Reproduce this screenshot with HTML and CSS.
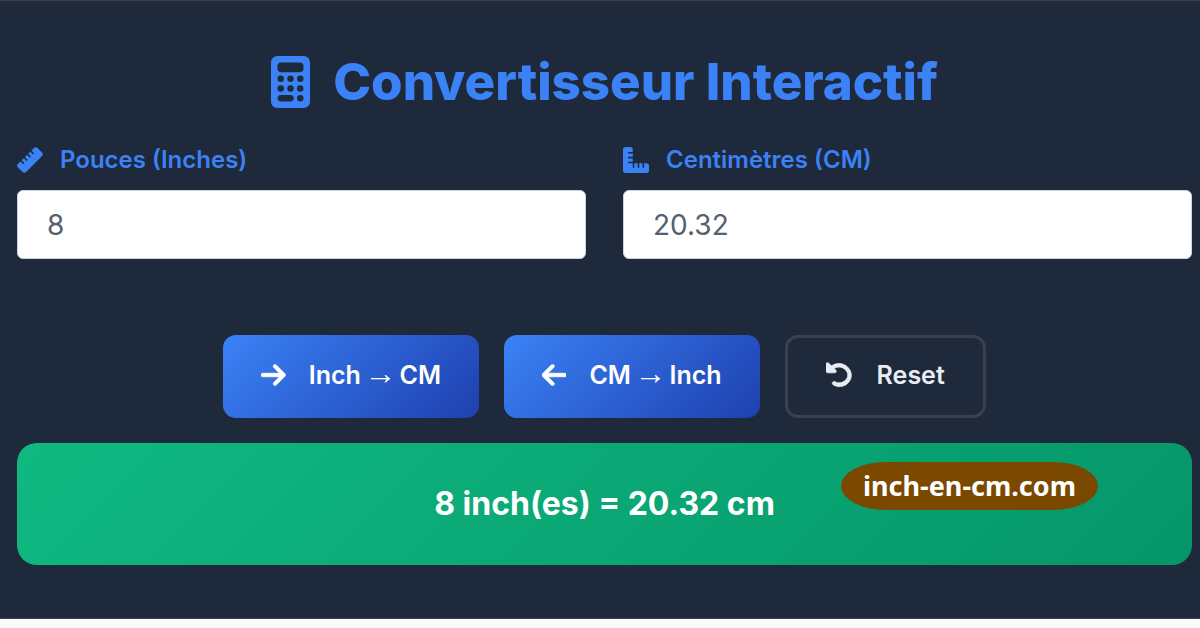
FILE: index.html
```html
<!DOCTYPE html>
<html lang="fr">
<head>
    <meta charset="UTF-8">
    <meta name="viewport" content="width=device-width, initial-scale=1.0">
    <title>Convertisseur Interactif</title>
    <link rel="stylesheet" href="styles.css">
</head>
<body>
    <main class="converter">
        <h1 class="title">
            <svg class="title-icon" viewBox="0 0 384 512" aria-hidden="true"><path d="M64 0C28.700 0 0 28.700 0 64V448c0 35.300 28.700 64 64 64H320c35.300 0 64-28.700 64-64V64c0-35.300-28.700-64-64-64H64zM96 64H288c17.700 0 32 14.300 32 32v32c0 17.700-14.300 32-32 32H96c-17.700 0-32-14.300-32-32V96c0-17.700 14.300-32 32-32zm32 160a32 32 0 1 1 -64 0 32 32 0 1 1 64 0zM96 352a32 32 0 1 1 0-64 32 32 0 1 1 0 64zM64 416c0-17.700 14.300-32 32-32h96c17.700 0 32 14.300 32 32s-14.300 32-32 32H96c-17.700 0-32-14.300-32-32zM192 256a32 32 0 1 1 0-64 32 32 0 1 1 0 64zm32 64a32 32 0 1 1 -64 0 32 32 0 1 1 64 0zm64-64a32 32 0 1 1 0-64 32 32 0 1 1 0 64zm32 64a32 32 0 1 1 -64 0 32 32 0 1 1 64 0zM288 448a32 32 0 1 1 0-64 32 32 0 1 1 0 64z"/></svg>
            Convertisseur Interactif
        </h1>

        <div class="fields">
            <div class="input-group">
                <label for="inches">
                    <svg class="icon" viewBox="0 0 512 512" aria-hidden="true"><path d="M177.900 494.100c-18.700 18.700-49.100 18.700-67.900 0L17.900 401.900c-18.700-18.700-18.700-49.100 0-67.900l50.700-50.700 48 48c6.200 6.200 16.400 6.200 22.600 0s6.200-16.400 0-22.600l-48-48 41.400-41.400 48 48c6.200 6.200 16.400 6.200 22.600 0s6.200-16.400 0-22.600l-48-48 41.400-41.400 48 48c6.200 6.200 16.400 6.200 22.600 0s6.200-16.400 0-22.600l-48-48 41.400-41.400 48 48c6.200 6.200 16.400 6.200 22.600 0s6.200-16.400 0-22.600l-48-48 50.700-50.700c18.700-18.700 49.100-18.700 67.900 0l92.100 92.100c18.700 18.700 18.700 49.100 0 67.900L177.900 494.100z"/></svg>
                    Pouces (Inches)
                </label>
                <input type="text" inputmode="decimal" id="inches" value="8">
            </div>
            <div class="input-group">
                <label for="cm">
                    <svg class="icon" viewBox="0 0 512 512" aria-hidden="true"><path d="M.2 468.900C2.700 493.100 23.100 512 48 512l96 0 320 0c26.500 0 48-21.500 48-48l0-96c0-26.500-21.500-48-48-48l-48 0 0 80c0 8.800-7.200 16-16 16s-16-7.200-16-16l0-80-64 0 0 80c0 8.800-7.200 16-16 16s-16-7.200-16-16l0-80-64 0 0 80c0 8.800-7.200 16-16 16s-16-7.200-16-16l0-80-80 0c-8.800 0-16-7.200-16-16s7.200-16 16-16l80 0 0-64-80 0c-8.800 0-16-7.200-16-16s7.200-16 16-16l80 0 0-64-80 0c-8.800 0-16-7.200-16-16s7.200-16 16-16l80 0 0-48c0-26.500-21.500-48-48-48L48 0C21.500 0 0 21.500 0 48L0 368l0 96c0 1.700 .1 3.300 .2 4.900z"/></svg>
                    Centimètres (CM)
                </label>
                <input type="text" inputmode="decimal" id="cm" value="20.32">
            </div>
        </div>

        <div class="actions">
            <button type="button" class="btn btn-primary" onclick="inchToCm()">
                <svg class="btn-icon" viewBox="0 0 448 512" aria-hidden="true"><path d="M438.600 278.600c12.500-12.500 12.500-32.800 0-45.300l-160-160c-12.500-12.500-32.800-12.500-45.300 0s-12.500 32.800 0 45.300L338.800 224 32 224c-17.700 0-32 14.300-32 32s14.300 32 32 32l306.700 0L233.400 393.400c-12.500 12.500-12.500 32.800 0 45.300s32.800 12.500 45.300 0l160-160z"/></svg>
                <span>Inch <span class="arrow">→</span> CM</span>
            </button>
            <button type="button" class="btn btn-primary" onclick="cmToInch()">
                <svg class="btn-icon" viewBox="0 0 448 512" aria-hidden="true"><path d="M9.400 233.400c-12.500 12.500-12.500 32.800 0 45.300l160 160c12.500 12.500 32.800 12.500 45.300 0s12.500-32.800 0-45.300L109.200 288 416 288c17.700 0 32-14.300 32-32s-14.300-32-32-32l-306.700 0L214.600 118.600c12.500-12.500 12.500-32.800 0-45.300s-32.800-12.500-45.300 0l-160 160z"/></svg>
                <span>CM <span class="arrow">→</span> Inch</span>
            </button>
            <button type="button" class="btn btn-outline" onclick="resetValues()">
                <svg class="btn-icon" viewBox="0 0 512 512" aria-hidden="true"><path d="M24 32C10 32 0 42 0 56V184c0 18 14 32 32 32H160c26 0 38-30 20-48L150 138c62-42 148-34 202 20c62 62 62 134 0 196c-50 50-126 60-186 24c-18-11-36-4-46 10c-10 16-5 36 10 46c88 54 200 42 268-26c87-87 87-209 0-296c-80-80-208-88-296-22L56 44C46 35 36 32 24 32z"/></svg>
                Reset
            </button>
        </div>

        <div class="result">
            <output id="result" for="inches cm">8 inch(es) = 20.32 cm</output>
            <span class="site-badge">inch-en-cm.com</span>
        </div>
    </main>

    <script>
        const inches = document.getElementById('inches');
        const cm = document.getElementById('cm');
        const result = document.getElementById('result');

        function inchToCm() {
            cm.value = +(inches.value * 2.54).toFixed(2);
            result.textContent = `${inches.value} inch(es) = ${cm.value} cm`;
        }

        function cmToInch() {
            inches.value = +(cm.value / 2.54).toFixed(2);
            result.textContent = `${cm.value} cm = ${inches.value} inch(es)`;
        }

        function resetValues() {
            inches.value = '';
            cm.value = '';
            result.textContent = '';
        }
    </script>
</body>
</html>
```
FILE: styles.css
```css
:root {
    --primary: #3b82f6;
    --primary-dark: #1e40af;
    --card-bg: #1e293b;
    --border: #374151;
}

* {
    box-sizing: border-box;
}

body {
    margin: 0;
    background: #fafafa;
    font-family: Inter, 'Liberation Sans', sans-serif;
}

.converter {
    padding: 49px 8px 53px 17px;
    background: var(--card-bg);
    border-top: 1px solid var(--border);
    border-bottom: 1px solid var(--border);
    box-shadow: 0 2px 8px rgba(0, 0, 0, 0.2);
}

svg {
    fill: currentColor;
    flex-shrink: 0;
}

.title {
    display: flex;
    align-items: center;
    justify-content: center;
    gap: 23px;
    margin: 0 0 31px;
    color: var(--primary);
    font-size: 51px;
    line-height: 64px;
    font-weight: 800;
}

.title-icon {
    height: 52px;
}

.icon {
    height: 26px;
}

.btn-icon {
    height: 28px;
    stroke: currentColor;
    stroke-width: 14px;
}

/* Champs */
.fields {
    display: grid;
    grid-template-columns: repeat(auto-fit, minmax(400px, 1fr));
    gap: 37px;
    margin-bottom: 76px;
}

.input-group label {
    display: flex;
    align-items: center;
    gap: 17px;
    margin-bottom: 15px;
    color: var(--primary);
    font-size: 24px;
    line-height: 30px;
    font-weight: 600;
}

.input-group input {
    display: block;
    width: 100%;
    height: 69px;
    padding: 0 29px;
    border: 1px solid #cbd5e1;
    border-radius: 6px;
    background: white;
    color: #56606e;
    font-family: inherit;
    font-size: 28px;
}

/* Boutons */
.actions {
    display: flex;
    flex-wrap: wrap;
    justify-content: center;
    gap: 25px;
    margin-bottom: 25px;
}

.btn {
    display: flex;
    align-items: center;
    gap: 23px;
    height: 83px;
    padding: 0 38px 4px;
    border: none;
    border-radius: 13px;
    font-family: inherit;
    font-size: 25px;
    line-height: 30px;
    font-weight: 600;
    cursor: pointer;
}

.btn-primary {
    background: linear-gradient(135deg, var(--primary), var(--primary-dark));
    color: white;
}

.btn-outline {
    border: 3px solid var(--border);
    background: transparent;
    color: #e8edf3;
}

.arrow {
    margin: 0 -3px;
    font-family: 'Liberation Serif', serif;
    font-size: 32px;
    line-height: 24px;
    font-weight: 400;
}

/* Résultat */
.result {
    position: relative;
    padding: 40px;
    border-radius: 20px;
    background: linear-gradient(135deg, #10b981, #059669);
    color: white;
    font-size: 32px;
    line-height: 42px;
    font-weight: 700;
    text-align: center;
}

.site-badge {
    position: absolute;
    top: 19px;
    right: 8%;
    padding: 0 22px;
    border-radius: 45px / 24px;
    background: #7b4800;
    font-family: 'Noto Sans', sans-serif;
    font-size: 27px;
    line-height: 48px;
    font-weight: 700;
}
```
